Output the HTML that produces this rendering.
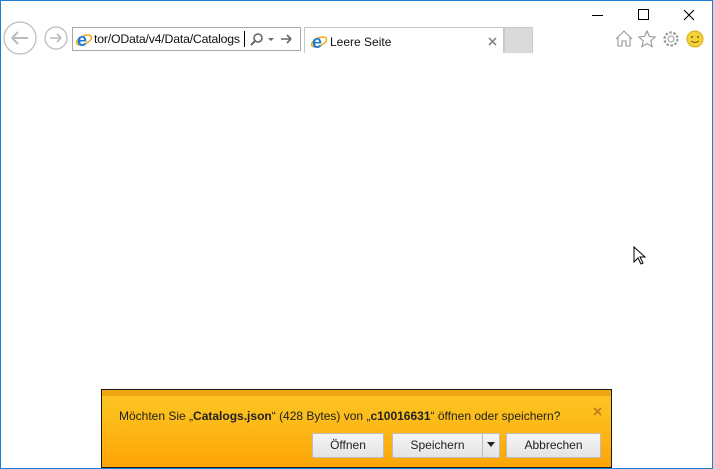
<!DOCTYPE html>
<html><head><meta charset="utf-8"><style>
*{margin:0;padding:0;box-sizing:border-box}
body{width:713px;height:469px;overflow:hidden;background:#fff;font-family:"Liberation Sans",sans-serif;position:relative}
.frame{position:absolute;left:0;top:0;width:713px;height:469px;border:1px solid #1a7fd4}
.abs{position:absolute}
.addr{left:72px;top:27px;width:229px;height:24px;border:1px solid #a8a8a8;background:#fff}
.addr span{position:absolute;left:21px;top:4px;font-size:12.3px;color:#111;letter-spacing:-0.2px}
.tab{left:304px;top:27px;width:200px;height:26px;border:1px solid #c8c8c8;border-bottom:none;background:#fff}
.tab span{position:absolute;left:25px;top:7px;font-size:12px;color:#111}
.newtab{left:504px;top:27px;width:29px;height:26px;background:#dadada;border:1px solid #c8c8c8;border-bottom:none}
.bar{left:101px;top:389px;width:511px;height:79px;border:1px solid #1a1a1a;background:linear-gradient(#fcc324 0,#fcbf1c 30%,#fdb010 70%,#fda406 100%)}
.bar .strip{position:absolute;left:0;top:0;right:0;height:6px;background:#eea710}
.msg{position:absolute;left:17px;top:19px;font-size:12px;color:#222}
.btn{position:absolute;top:43px;height:25px;background:linear-gradient(#f5f5f5,#e4e4e4);border:1px solid #bdbdbd;font-size:12px;color:#222;text-align:center;line-height:23px}
</style></head><body>
<div class="frame"></div>
<div class="abs" style="left:592px;top:15px;width:11px;height:1px;background:#000"></div>
<div class="abs" style="left:638px;top:9px;width:11px;height:11px;border:1px solid #000"></div>
<svg class="abs" style="left:683px;top:9px" width="12" height="12"><path d="M1 1L11 11M11 1L1 11" stroke="#000" stroke-width="1.1"/></svg>
<svg class="abs" style="left:2px;top:20px" width="70" height="36">
<circle cx="18" cy="18" r="16" fill="#fff" stroke="#bbb" stroke-width="1.2"/>
<path d="M10 18h16M10 18l6-6M10 18l6 6" stroke="#bbb" stroke-width="2" fill="none"/>
<circle cx="54" cy="18" r="11" fill="#fff" stroke="#bbb" stroke-width="1.2"/>
<path d="M48 18h11M59 18l-4-4M59 18l-4 4" stroke="#bbb" stroke-width="1.6" fill="none"/>
</svg>
<div class="abs addr">
<svg class="abs" style="left:2px;top:2px" width="18" height="18"><ellipse cx="9" cy="10" rx="8" ry="4" fill="none" stroke="#f0b020" stroke-width="1.6" transform="rotate(-25 9 10)"/><text x="2" y="16" font-family="Liberation Sans" font-size="18" fill="#1e7bd6" font-weight="bold">e</text></svg>
<span>tor/OData/v4/Data/Catalogs</span>
<div class="abs" style="left:171px;top:3px;width:1px;height:16px;background:#000"></div>
<svg class="abs" style="left:177px;top:4px" width="50" height="16"><circle cx="8" cy="6" r="4" stroke="#666" stroke-width="1.6" fill="none"/><path d="M5 9l-4 4" stroke="#666" stroke-width="2"/><path d="M18 6h6l-3 3z" fill="#666"/><path d="M31 7h10M41 7l-4-4M41 7l-4 4" stroke="#666" stroke-width="1.6" fill="none"/></svg>
</div>
<div class="abs tab">
<svg class="abs" style="left:5px;top:4px" width="18" height="18"><ellipse cx="9" cy="10" rx="8" ry="4" fill="none" stroke="#f0b020" stroke-width="1.6" transform="rotate(-25 9 10)"/><text x="2" y="16" font-family="Liberation Sans" font-size="18" fill="#1e7bd6" font-weight="bold">e</text></svg>
<span>Leere Seite</span>
<svg class="abs" style="left:183px;top:9px" width="9" height="9"><path d="M1 1L8 8M8 1L1 8" stroke="#888" stroke-width="1.6"/></svg>
</div>
<div class="abs newtab"></div>
<svg class="abs" style="left:614px;top:29px" width="96" height="20">
<path d="M2 10L10 2L18 10M4 8v9h4v-5h4v5h4v-9" stroke="#999" fill="none" stroke-width="1.1"/>
<path d="M33 2l2.4 5.4 5.8.6-4.4 3.9 1.3 5.7-5.1-3-5.1 3 1.3-5.7-4.4-3.9 5.8-.6z" stroke="#999" fill="none" stroke-width="1.1"/>
<circle cx="57" cy="10" r="3" stroke="#999" fill="none"/><circle cx="57" cy="10" r="6.5" stroke="#999" fill="none" stroke-width="2.2" stroke-dasharray="2.5 1.6"/>
<circle cx="81" cy="10" r="8" fill="#f5d23a" stroke="#d9ad10"/><circle cx="78" cy="8" r="1" fill="#7a5a00"/><circle cx="84" cy="8" r="1" fill="#7a5a00"/><path d="M77 12q4 3 8 0" stroke="#7a5a00" fill="none"/>
</svg>
<svg class="abs" style="left:633px;top:246px" width="14" height="20"><path d="M1 1v15l4-4 3 6 2-1-3-6h5z" fill="#fff" stroke="#000"/></svg>
<div class="abs bar"><div class="strip"></div>
<div class="msg">Möchten Sie „<b>Catalogs.json</b>“ (428 Bytes) von „<b>c10016631</b>“ öffnen oder speichern?</div>
<svg class="abs" style="left:491px;top:17px" width="9" height="9"><path d="M1 1L8 8M8 1L1 8" stroke="#c07a20" stroke-width="1.6"/></svg>
<div class="btn" style="left:210px;width:72px">Öffnen</div>
<div class="btn" style="left:290px;width:91px">Speichern</div>
<div class="btn" style="left:380px;width:18px"><svg width="10" height="20"><path d="M1 8h8l-4 5z" fill="#222"/></svg></div>
<div class="btn" style="left:404px;width:95px">Abbrechen</div>
</div>
</body></html>
